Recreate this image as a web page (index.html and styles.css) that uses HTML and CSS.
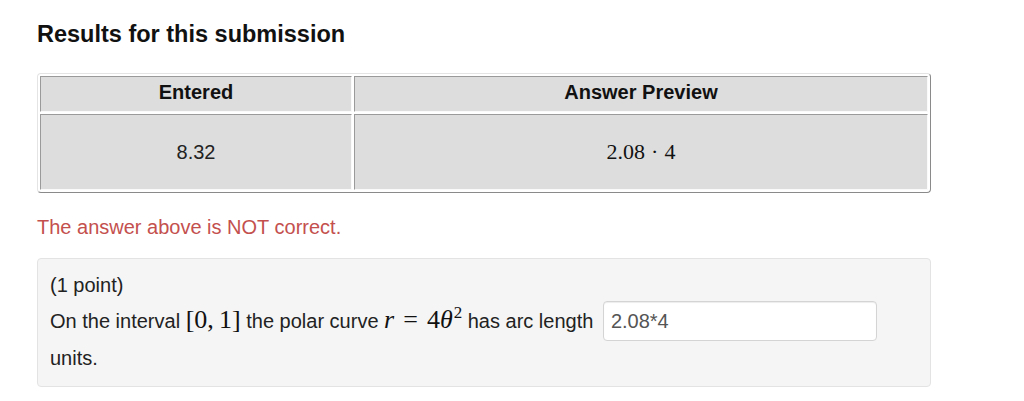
FILE: index.html
```html
<!DOCTYPE html>
<html lang="en">
<head>
    <meta charset="UTF-8">
    <meta name="viewport" content="width=device-width, initial-scale=1.0">
    <title>Results for this submission</title>
    <link rel="stylesheet" href="styles.css">
</head>
<body>
    <div class="container">
        <h2 class="results-title">Results for this submission</h2>

        <table class="attempt-results">
            <tr>
                <th class="col-entered">Entered</th>
                <th>Answer Preview</th>
            </tr>
            <tr>
                <td class="entered">8.32</td>
                <td class="preview"><span class="math">2.08<span class="op">&middot;</span>4</span></td>
            </tr>
        </table>

        <div class="result-message">The answer above is NOT correct.</div>

        <div class="problem-well">
            <div class="point">(1 point)</div>
            <div>On the interval <span class="math big">[0,&thinsp;1]</span> the polar curve <span class="math big"><i>r</i><span class="eq">=</span>4<i>&theta;</i><sup>2</sup></span> has arc length <input type="text" class="answer-input" value="2.08*4"></div>
            <div>units.</div>
        </div>
    </div>
</body>
</html>
```

FILE: styles.css
```css
* {
    margin: 0;
    padding: 0;
    box-sizing: border-box;
}

body {
    font-family: 'Liberation Sans', Arial, sans-serif;
    font-size: 20px;
    color: #333;
    background: white;
}

.container {
    width: 894px;
    margin-left: 37px;
    padding-top: 21px;
}

.results-title {
    font-size: 23.5px;
    font-weight: bold;
    color: #111;
    line-height: 27px;
    margin-bottom: 25px;
}

.attempt-results {
    width: 894px;
    border-collapse: separate;
    border-spacing: 2px;
    border: 1px solid;
    border-color: #e4e4e4 #8a8a8a #8a8a8a #e4e4e4;
    border-radius: 4px;
}

.attempt-results th,
.attempt-results td {
    background: #dddddd;
    border: 1px solid;
    border-color: #9a9a9a #fafafa #fafafa #9a9a9a;
    text-align: center;
    color: #222;
}

.attempt-results th {
    height: 36px;
    padding-bottom: 3px;
    font-weight: bold;
    color: #111;
}

.attempt-results td {
    height: 76px;
}

.col-entered {
    width: 312px;
}

.math {
    font-family: 'Liberation Serif', 'DejaVu Serif', serif;
    color: #111;
}

.preview .math {
    font-size: 22px;
}

.op {
    margin: 0 6px;
}

.math.big {
    font-size: 26px;
}

.math i {
    font-style: italic;
}

.math sup {
    font-size: 17px;
    line-height: 0;
    vertical-align: 10px;
    margin-left: 1px;
}

.eq {
    margin: 0 9px;
}

.result-message {
    color: #c4504e;
    line-height: 23px;
    margin-top: 23px;
}

.problem-well {
    margin-top: 19px;
    background: #f5f5f5;
    border: 1px solid #e3e3e3;
    border-radius: 4px;
    padding: 11px 12px 11px;
    line-height: 34px;
    color: #222;
}

.point {
    line-height: 31px;
}

.answer-input {
    width: 274px;
    height: 40px;
    padding: 0 7px;
    font-family: 'Liberation Sans', Arial, sans-serif;
    font-size: 20px;
    color: #555;
    background: white;
    border: 1px solid #d4d4d4;
    border-radius: 4px;
    box-shadow: inset 0 1px 1px rgba(0, 0, 0, 0.075);
    margin-left: 4px;
    vertical-align: baseline;
}
```
